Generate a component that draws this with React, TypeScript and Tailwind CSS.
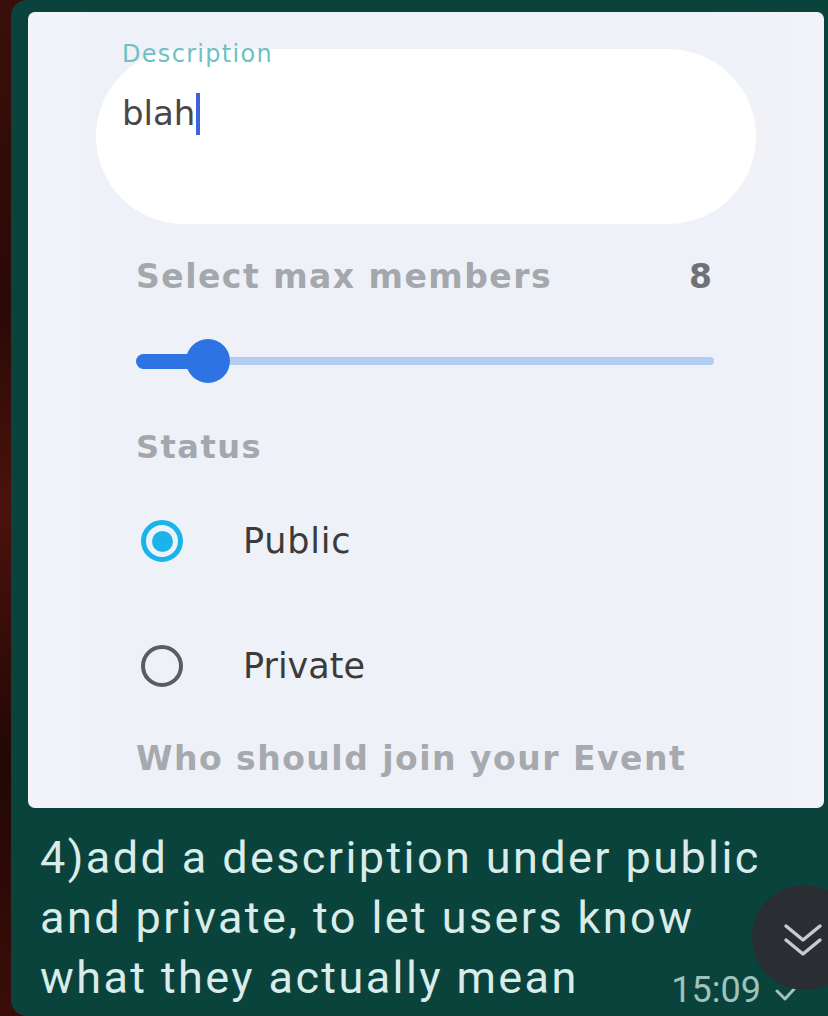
import React from "react";

function Radio({ checked }: { checked: boolean }) {
  return checked ? (
    <div className="w-[42px] h-[42px] rounded-full border-[5px] border-[#19b5ea] flex items-center justify-center shrink-0">
      <div className="w-[21px] h-[21px] rounded-full bg-[#19b5ea]" />
    </div>
  ) : (
    <div className="w-[42px] h-[42px] rounded-full border-[4px] border-[#5b5c5e] shrink-0" />
  );
}

export default function App() {
  return (
    <div className="relative w-[828px] h-[1016px] overflow-hidden flex bg-[linear-gradient(180deg,#3a0f0b_0%,#2a0906_30%,#4a120d_50%,#220705_75%,#3a0d09_100%)]">
      <div className="ml-[11px] flex-1 bg-[#0a433b] rounded-tl-[16px] rounded-bl-[16px] pt-[12px] pl-[17px] pr-[4px] flex flex-col">
        {/* Inner screenshot panel */}
        <div
          className="h-[796px] rounded-[7px] bg-[linear-gradient(to_right,#f2f4f9_0px,#f2f4f9_50px,#eef1f8_54px,#eef1f8_680px,#f0f2f8_720px,#f2f3f9_100%)] flex flex-col"
          style={{ fontFamily: '"DejaVu Sans", "Open Sans", sans-serif' }}
        >
          {/* Description pill */}
          <div className="relative mt-[37px] ml-[68px] w-[660px] h-[175px] rounded-[88px] bg-white">
            <div className="absolute left-[26px] top-[-7px] text-[24px] leading-none tracking-[1.3px] text-[#6ebfc6]">
              Description
            </div>
            <div className="pt-[47px] pl-[26px] flex items-start">
              <span className="text-[34px] leading-none text-[#474747]">blah</span>
              <span className="ml-[1px] mt-[-3px] w-[4px] h-[42px] bg-[#3f63d8]" />
            </div>
          </div>

          {/* Select max members */}
          <div className="mt-[36px] ml-[108px] mr-[112px] flex justify-between items-start text-[33px] font-bold leading-none">
            <span className="text-[#a4a7ac] tracking-[1.5px]">Select max members</span>
            <span className="text-[#6e7176]">8</span>
          </div>

          {/* Slider */}
          <div className="mt-[46px] ml-[108px] w-[578px] h-[44px] flex items-center">
            <div className="w-[66px] h-[15px] rounded-l-full bg-[#2e73e3]" />
            <div className="w-[44px] h-[44px] rounded-full bg-[#2e73e3] ml-[-16px] shrink-0" />
            <div className="flex-1 h-[8px] bg-[#b3cdf2] rounded-r-full" />
          </div>

          {/* Status */}
          <div className="mt-[48px] ml-[108px] text-[32px] font-bold leading-none tracking-[1.5px] text-[#a4a7ac]">
            Status
          </div>

          {/* Public */}
          <div className="mt-[57px] ml-[113px] h-[42px] flex items-center">
            <Radio checked />
            <span className="ml-[60px] text-[35px] leading-none tracking-[0.8px] text-[#3b3b3b]">Public</span>
          </div>

          {/* Private */}
          <div className="mt-[83px] ml-[113px] h-[42px] flex items-center">
            <Radio checked={false} />
            <span className="ml-[60px] text-[35px] leading-none text-[#3b3b3b]">Private</span>
          </div>

          {/* Who should join */}
          <div className="mt-[55px] ml-[108px] text-[33px] font-bold leading-none tracking-[1.5px] text-[#a6a9ae]">
            Who should join your Event
          </div>
        </div>

        {/* Message text */}
        <div
          className="mt-[20px] pl-[12px] text-[45px] leading-[60px] tracking-[2.4px] text-[#d9ecea]"
          style={{ fontFamily: 'Roboto, "Liberation Sans", sans-serif' }}
        >
          <div className="whitespace-nowrap">4)add a description under public</div>
          <div className="whitespace-nowrap">and private, to let users know</div>
          <div className="flex items-start whitespace-nowrap">
            <span>what they actually mean</span>
            <span className="ml-auto mr-[27px] mt-[24px] flex items-start tracking-normal">
              <span className="text-[36px] leading-[36px] text-[#9fc2bb]">15:09</span>
              <svg className="ml-[14px] mt-[12px]" width="22" height="18" viewBox="0 0 22 18" fill="none">
                <path d="M2 7 L10 15 L20 4" stroke="#9fc2bb" strokeWidth="3" strokeLinecap="round" strokeLinejoin="round" />
              </svg>
            </span>
          </div>
        </div>
      </div>

      {/* Floating scroll-down button */}
      <div className="absolute left-[752px] top-[885px] w-[105px] h-[105px] rounded-full bg-[#2a2e33] flex items-start">
        <svg className="ml-[31px] mt-[38px]" width="40" height="36" viewBox="0 0 40 36" fill="none">
          <path d="M3 3 L20 17 L37 3" stroke="#c5cbce" strokeWidth="3.5" strokeLinecap="round" strokeLinejoin="round" />
          <path d="M3 17 L20 31 L37 17" stroke="#c5cbce" strokeWidth="3.5" strokeLinecap="round" strokeLinejoin="round" />
        </svg>
      </div>
    </div>
  );
}
